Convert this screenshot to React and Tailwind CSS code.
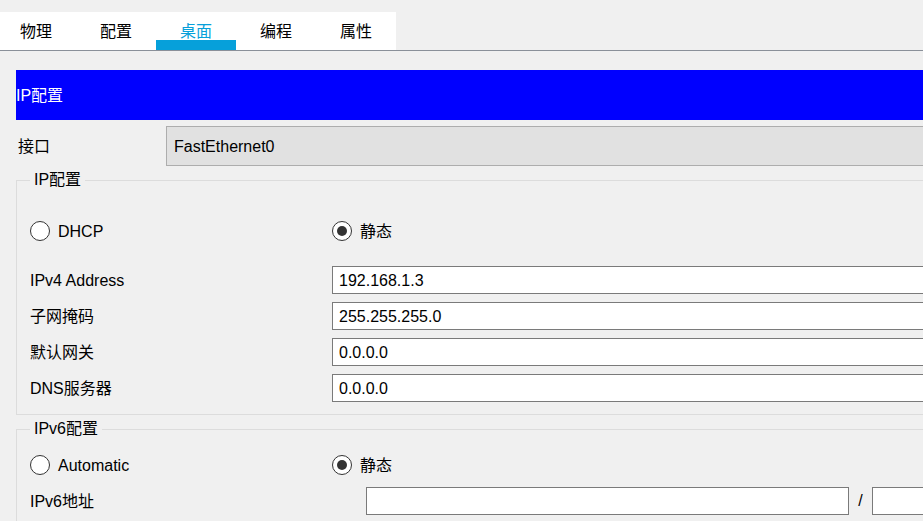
import { useState } from "react";

const tabs = ["物理", "配置", "桌面", "编程", "属性"];

function Radio({ checked, label }) {
    return (
        <div className="flex items-center h-[20px]">
            <span className="w-[20px] h-[20px] rounded-full border border-[#333333] bg-white flex items-center justify-center">
                {checked && <span className="w-[10px] h-[10px] rounded-full bg-[#333333]" />}
            </span>
            <span className="ml-[8px] leading-[20px] pt-[1px]">{label}</span>
        </div>
    );
}

function Field({ value, className = "" }) {
    return (
        <div className={`h-[28px] border border-[#7a7a7a] bg-white flex items-center pl-[6px] pt-[1px] ${className}`}>
            {value}
        </div>
    );
}

export default function App() {
    const [active, setActive] = useState(2);

    const ipv4 = [
        { label: "IPv4 Address", value: "192.168.1.3" },
        { label: "子网掩码", value: "255.255.255.0" },
        { label: "默认网关", value: "0.0.0.0" },
        { label: "DNS服务器", value: "0.0.0.0" },
    ];

    return (
        <div
            className="w-[923px] h-[521px] overflow-hidden bg-[#f0f0f0] text-[16px] text-black"
            style={{ fontFamily: '"Liberation Sans", "Noto Sans CJK SC", sans-serif' }}
        >
            {/* tab strip */}
            <div className="pt-[12px] border-b border-[#8a9099]">
                <div className="w-[396px] h-[38px] bg-white overflow-hidden">
                    <div className="flex ml-[-4px]">
                        {tabs.map((t, i) => (
                            <div
                                key={t}
                                onClick={() => setActive(i)}
                                className={`relative w-[80px] h-[38px] flex items-center justify-center pt-[2px] cursor-pointer ${i === active ? "text-[#06a0da]" : ""}`}
                            >
                                {t}
                                {i === active && <span className="absolute left-0 bottom-0 w-[80px] h-[10px] bg-[#06a0da]" />}
                            </div>
                        ))}
                    </div>
                </div>
            </div>

            <div className="w-[1100px] pl-[16px]">
                <div className="mt-[19px] h-[50px] bg-[#0000ff] text-white flex items-center pt-[2px]">IP配置</div>

                <div className="mt-[6px] flex items-center">
                    <div className="w-[150px] pl-[2px] pt-[1px]">接口</div>
                    <div className="flex-1 h-[40px] border border-[#adadad] bg-[#e1e1e1] flex items-center pl-[7px] pt-[1px]">
                        FastEthernet0
                    </div>
                </div>

                {/* IPv4 settings */}
                <fieldset className="mt-[6px] border border-[#dcdcdc] px-[13px] pb-[12px]">
                    <legend className="px-[4px] leading-[16px]">IP配置</legend>
                    <div className="mt-[33px] flex">
                        <div className="w-[302px]"><Radio label="DHCP" /></div>
                        <Radio checked label="静态" />
                    </div>
                    <div className="mt-[25px] flex flex-col gap-[8px]">
                        {ipv4.map((r) => (
                            <div key={r.label} className="flex items-center">
                                <div className="w-[302px] pt-[1px]">{r.label}</div>
                                <Field value={r.value} className="flex-1" />
                            </div>
                        ))}
                    </div>
                </fieldset>

                {/* IPv6 settings */}
                <fieldset className="mt-[6px] border border-[#dcdcdc] px-[13px] pb-[12px]">
                    <legend className="px-[4px] leading-[16px]">IPv6配置</legend>
                    <div className="mt-[18px] flex">
                        <div className="w-[302px]"><Radio label="Automatic" /></div>
                        <Radio checked label="静态" />
                    </div>
                    <div className="mt-[12px] flex items-center">
                        <div className="w-[336px] pt-[1px]">IPv6地址</div>
                        <Field value="" className="w-[483px]" />
                        <div className="w-[23px] text-center">/</div>
                        <Field value="" className="w-[120px]" />
                    </div>
                </fieldset>
            </div>
        </div>
    );
}
